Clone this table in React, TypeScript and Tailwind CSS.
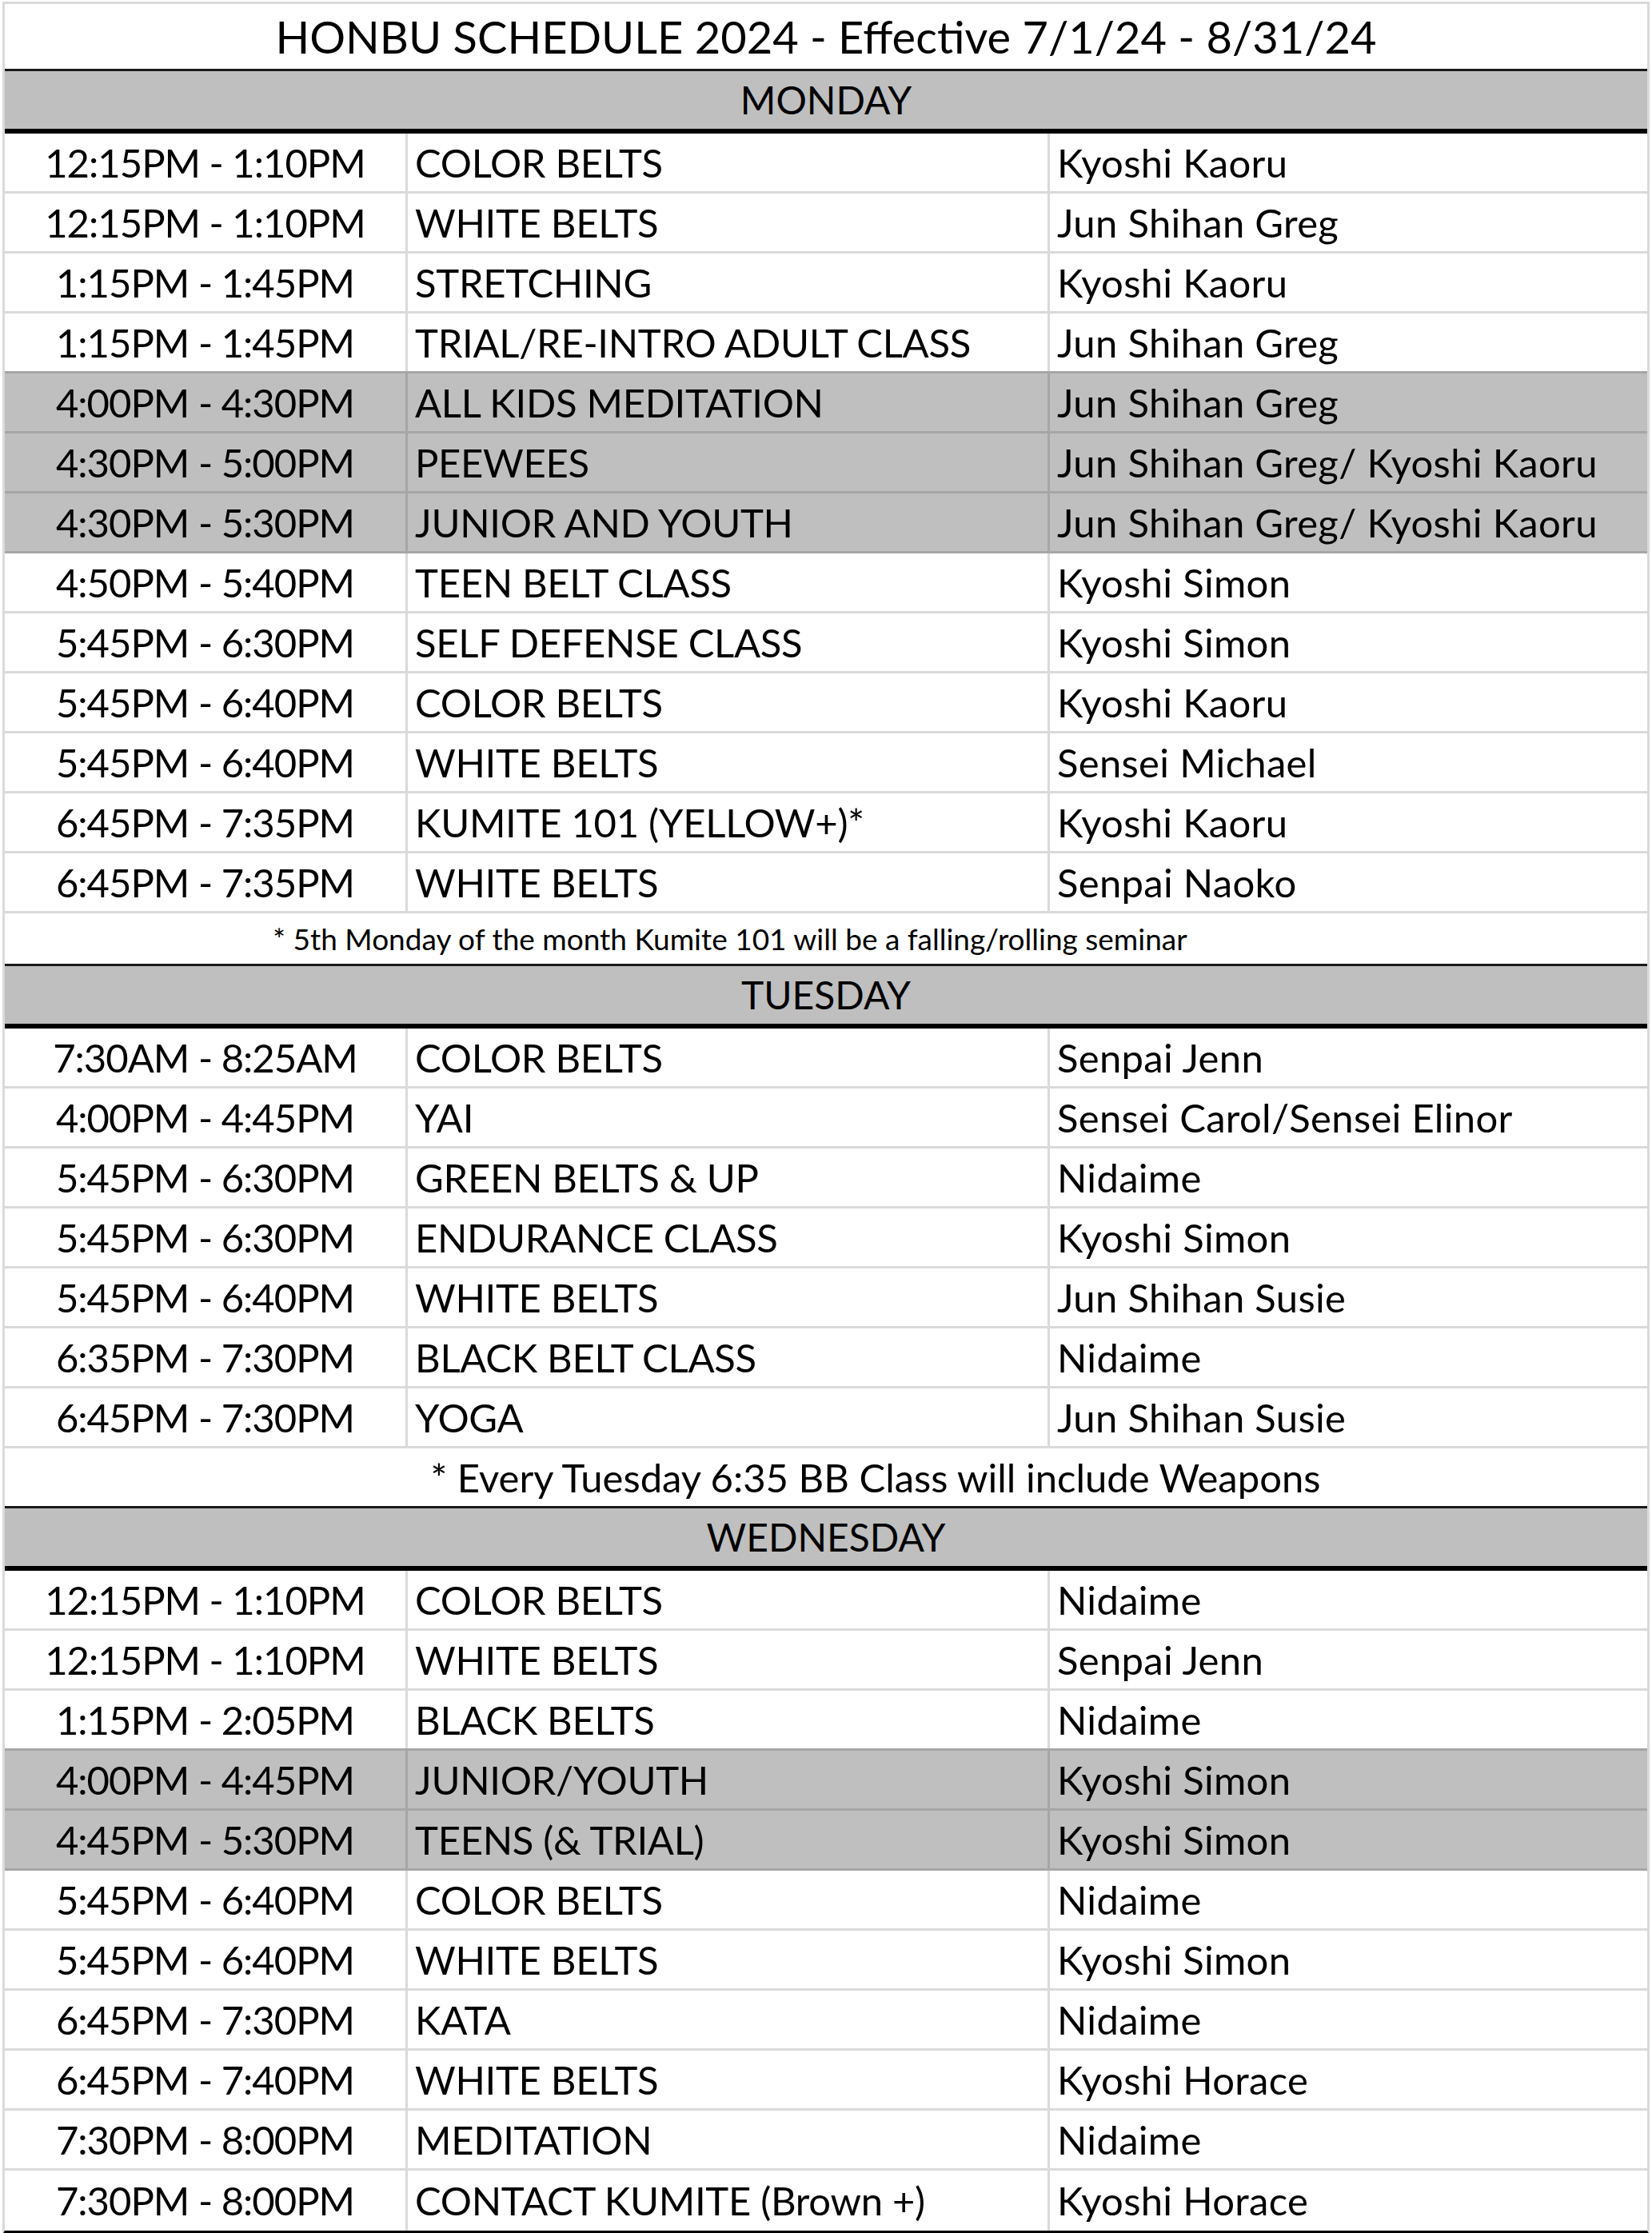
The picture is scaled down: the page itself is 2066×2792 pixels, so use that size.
import React from "react";

type Row = { time: string; cls: string; who: string; hl?: boolean };
type Day = { day: string; rows: Row[]; note?: string; noteSize: "sm" | "lg" };

const schedule: Day[] = [
  {
    day: "MONDAY",
    noteSize: "sm",
    note: "* 5th Monday of the month Kumite 101 will be a falling/rolling seminar",
    rows: [
      { time: "12:15PM - 1:10PM", cls: "COLOR BELTS", who: "Kyoshi Kaoru" },
      { time: "12:15PM - 1:10PM", cls: "WHITE BELTS", who: "Jun Shihan Greg" },
      { time: "1:15PM - 1:45PM", cls: "STRETCHING", who: "Kyoshi Kaoru" },
      { time: "1:15PM - 1:45PM", cls: "TRIAL/RE-INTRO ADULT CLASS", who: "Jun Shihan Greg" },
      { time: "4:00PM - 4:30PM", cls: "ALL KIDS MEDITATION", who: "Jun Shihan Greg", hl: true },
      { time: "4:30PM - 5:00PM", cls: "PEEWEES", who: "Jun Shihan Greg/ Kyoshi Kaoru", hl: true },
      { time: "4:30PM - 5:30PM", cls: "JUNIOR AND YOUTH", who: "Jun Shihan Greg/ Kyoshi Kaoru", hl: true },
      { time: "4:50PM - 5:40PM", cls: "TEEN BELT CLASS", who: "Kyoshi Simon" },
      { time: "5:45PM - 6:30PM", cls: "SELF DEFENSE CLASS", who: "Kyoshi Simon" },
      { time: "5:45PM - 6:40PM", cls: "COLOR BELTS", who: "Kyoshi Kaoru" },
      { time: "5:45PM - 6:40PM", cls: "WHITE BELTS", who: "Sensei Michael" },
      { time: "6:45PM - 7:35PM", cls: "KUMITE 101 (YELLOW+)*", who: "Kyoshi Kaoru" },
      { time: "6:45PM - 7:35PM", cls: "WHITE BELTS", who: "Senpai Naoko" },
    ],
  },
  {
    day: "TUESDAY",
    noteSize: "lg",
    note: "* Every Tuesday 6:35 BB Class will include Weapons",
    rows: [
      { time: "7:30AM - 8:25AM", cls: "COLOR BELTS", who: "Senpai Jenn" },
      { time: "4:00PM - 4:45PM", cls: "YAI", who: "Sensei Carol/Sensei Elinor" },
      { time: "5:45PM - 6:30PM", cls: "GREEN BELTS & UP", who: "Nidaime" },
      { time: "5:45PM - 6:30PM", cls: "ENDURANCE CLASS", who: "Kyoshi Simon" },
      { time: "5:45PM - 6:40PM", cls: "WHITE BELTS", who: "Jun Shihan Susie" },
      { time: "6:35PM - 7:30PM", cls: "BLACK BELT CLASS", who: "Nidaime" },
      { time: "6:45PM - 7:30PM", cls: "YOGA", who: "Jun Shihan Susie" },
    ],
  },
  {
    day: "WEDNESDAY",
    noteSize: "lg",
    rows: [
      { time: "12:15PM - 1:10PM", cls: "COLOR BELTS", who: "Nidaime" },
      { time: "12:15PM - 1:10PM", cls: "WHITE BELTS", who: "Senpai Jenn" },
      { time: "1:15PM - 2:05PM", cls: "BLACK BELTS", who: "Nidaime" },
      { time: "4:00PM - 4:45PM", cls: "JUNIOR/YOUTH", who: "Kyoshi Simon", hl: true },
      { time: "4:45PM - 5:30PM", cls: "TEENS (& TRIAL)", who: "Kyoshi Simon", hl: true },
      { time: "5:45PM - 6:40PM", cls: "COLOR BELTS", who: "Nidaime" },
      { time: "5:45PM - 6:40PM", cls: "WHITE BELTS", who: "Kyoshi Simon" },
      { time: "6:45PM - 7:30PM", cls: "KATA", who: "Nidaime" },
      { time: "6:45PM - 7:40PM", cls: "WHITE BELTS", who: "Kyoshi Horace" },
      { time: "7:30PM - 8:00PM", cls: "MEDITATION", who: "Nidaime" },
      { time: "7:30PM - 8:00PM", cls: "CONTACT KUMITE (Brown +)", who: "Kyoshi Horace" },
    ],
  },
];

function ClassRow({ row, next, last }: { row: Row; next?: Row; last: boolean }) {
  const dark = row.hl || next?.hl;
  const divider = row.hl ? "border-[#a6a6a6]" : "border-[#dadada]";
  return (
    <div
      className={`flex h-[75px] text-[49px] leading-none ${row.hl ? "bg-[#bfbfbf]" : "bg-white"} ${
        last ? "" : `border-b-[3px] ${dark ? "border-b-[#a6a6a6]" : "border-b-[#dadada]"}`
      }`}
    >
      <div className={`w-[504px] shrink-0 flex items-center justify-center tracking-[-1px] border-r-[3px] ${divider}`}>
        {row.time}
      </div>
      <div className={`w-[803px] shrink-0 flex items-center pl-[9px] tracking-[-0.3px] border-r-[3px] ${divider}`}>
        {row.cls}
      </div>
      <div className="flex-1 flex items-center pl-[9px] tracking-[0.3px] whitespace-nowrap">{row.who}</div>
    </div>
  );
}

export default function App() {
  return (
    <div className="w-[2066px] h-[2792px] bg-white pt-[2px] pl-[3px] font-['Lato','Liberation_Sans',sans-serif] text-black">
      <div className="w-[2060px] border-x-[3px] border-t-[3px] border-[#dadada] border-b-[5px] border-b-black">
        <div className="h-[81px] flex items-center justify-center text-[56px] leading-none">
          HONBU SCHEDULE 2024 - Effective 7/1/24 - 8/31/24
        </div>

        {schedule.map((d, di) => (
          <div key={d.day}>
            <div className="h-[81px] bg-[#bfbfbf] border-t-[3px] border-t-[#1a1a1a] border-b-[6px] border-b-black flex items-center justify-center text-[48px] leading-none">
              {d.day}
            </div>
            {d.rows.map((r, i) => (
              <ClassRow
                key={i}
                row={r}
                next={d.rows[i + 1]}
                last={di === schedule.length - 1 && i === d.rows.length - 1}
              />
            ))}
            {d.note && (
              <div
                className={`flex items-center justify-center leading-none ${
                  d.noteSize === "sm" ? "h-[63px] text-[37px] pr-[240px]" : "h-[72px] text-[49px] pl-[124px]"
                }`}
              >
                {d.note}
              </div>
            )}
          </div>
        ))}
      </div>
    </div>
  );
}
